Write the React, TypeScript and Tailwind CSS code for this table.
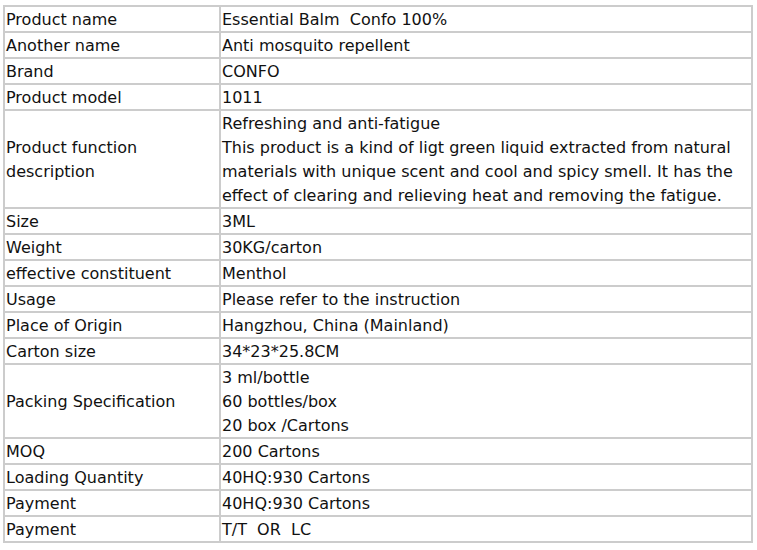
import React from "react";

const rows: { label: string[]; value: string[] }[] = [
  { label: ["Product name"], value: ["Essential Balm  Confo 100%"] },
  { label: ["Another name"], value: ["Anti mosquito repellent"] },
  { label: ["Brand"], value: ["CONFO"] },
  { label: ["Product model"], value: ["1011"] },
  {
    label: ["Product function", "description"],
    value: [
      "Refreshing and anti-fatigue",
      "This product is a kind of ligt green liquid extracted from natural",
      "materials with unique scent and cool and spicy smell. It has the",
      "effect of clearing and relieving heat and removing the fatigue.",
    ],
  },
  { label: ["Size"], value: ["3ML"] },
  { label: ["Weight"], value: ["30KG/carton"] },
  { label: ["effective constituent"], value: ["Menthol"] },
  { label: ["Usage"], value: ["Please refer to the instruction"] },
  { label: ["Place of Origin"], value: ["Hangzhou, China (Mainland)"] },
  { label: ["Carton size"], value: ["34*23*25.8CM"] },
  {
    label: ["Packing Specification"],
    value: ["3 ml/bottle", "60 bottles/box", "20 box /Cartons"],
  },
  { label: ["MOQ"], value: ["200 Cartons"] },
  { label: ["Loading Quantity"], value: ["40HQ:930 Cartons"] },
  { label: ["Payment"], value: ["40HQ:930 Cartons"] },
  { label: ["Payment"], value: ["T/T  OR  LC"] },
];

export default function App() {
  return (
    <div className="w-[757px] h-[550px] bg-white pt-[5px] pl-[3px]" style={{ fontFamily: '"DejaVu Sans", Verdana, sans-serif' }}>
      <div className="w-[750px] border-2 border-[#cccccc] text-[16px] text-[#111111]">
        {rows.map((r, i) => (
          <div
            key={i}
            className={`flex ${i < rows.length - 1 ? "border-b-2 border-[#cccccc]" : ""}`}
          >
            <div className="w-[216px] shrink-0 border-r-2 border-[#cccccc] flex flex-col justify-center pl-[1px]">
              {r.label.map((t, j) => (
                <div key={j} className="whitespace-pre h-[24px] pt-[1px] leading-[23px]">{t}</div>
              ))}
            </div>
            <div className="flex-1 flex flex-col pl-[1px]">
              {r.value.map((t, j) => (
                <div key={j} className="whitespace-pre h-[24px] pt-[1px] leading-[23px]">{t}</div>
              ))}
            </div>
          </div>
        ))}
      </div>
    </div>
  );
}
